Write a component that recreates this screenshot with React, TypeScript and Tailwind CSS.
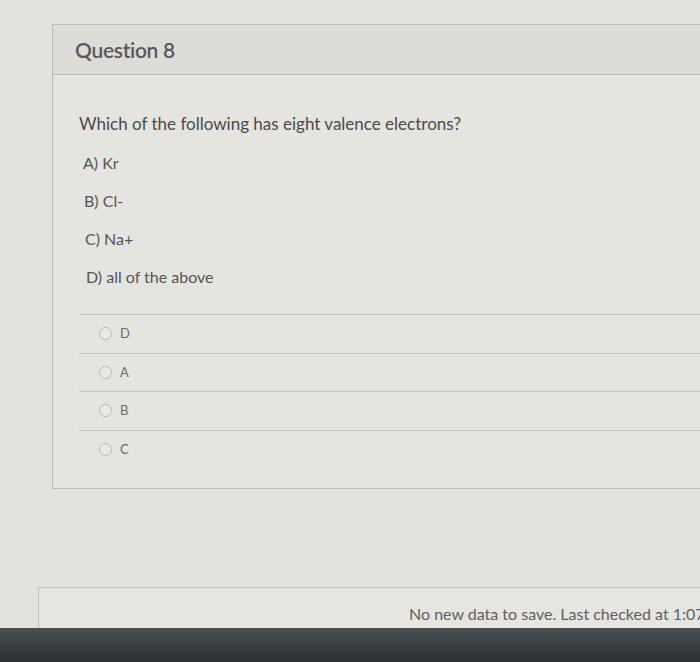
import React from 'react';

const options = ['A) Kr', 'B) Cl-', 'C) Na+', 'D) all of the above'];
const answers = ['D', 'A', 'B', 'C'];

function Radio() {
    return <span className="w-[13px] h-[13px] rounded-full border border-[#b9b8b3] bg-[#e9e8e3] shrink-0" />;
}

export default function App() {
    return (
        <div
            className="w-[700px] h-[662px] overflow-hidden flex flex-col bg-[#e3e2dc] text-[#4f4f4f]"
            style={{ fontFamily: 'Lato, "Open Sans", sans-serif' }}
        >
            <div className="h-[24px] shrink-0" />
            {/* question card */}
            <div className="ml-[52px] w-[680px] shrink-0 border border-[#bdbcb6] bg-[#e5e4df]">
                <div className="h-[50px] flex items-center pl-[22px] bg-[#dddcd6] border-b border-[#b9b8b2]">
                    <span className="text-[21px] font-semibold text-[#595959] tracking-[-0.3px]">Question 8</span>
                </div>
                <div className="pl-[26px] pt-[38px] pb-[20px] pr-0">
                    <p className="text-[17px] leading-[22px] text-[#4a4a4a]">Which of the following has eight valence electrons?</p>
                    <div className="flex flex-col gap-[16px] mt-[17px] pl-[4px]">
                        {options.map((o, i) => (
                            <div key={o} className="text-[16px] leading-[22px] text-[#555]" style={{ paddingLeft: i * 1 }}>{o}</div>
                        ))}
                    </div>
                    <div className="mt-[26px] flex flex-col">
                        {answers.map(a => (
                            <div key={a} className="h-[38.5px] border-t border-[#c6c5c0] flex items-center gap-[8px] pl-[20px]">
                                <Radio />
                                <span className="text-[13px] text-[#6a6a6a]">{a}</span>
                            </div>
                        ))}
                    </div>
                </div>
            </div>
            <div className="flex-1" />
            {/* save status */}
            <div className="ml-[38px] w-[700px] h-[41px] shrink-0 border-t border-l border-[#c3c2bd] bg-[#e6e5e0] flex items-start pt-[16px] pl-[370px]">
                <span className="whitespace-nowrap text-[16px] leading-[20px] text-[#606060]">No new data to save. Last checked at 1:07</span>
            </div>
            <div className="h-[34px] shrink-0 bg-gradient-to-b from-[#4a4f54] to-[#2b2e32]" />
        </div>
    );
}
